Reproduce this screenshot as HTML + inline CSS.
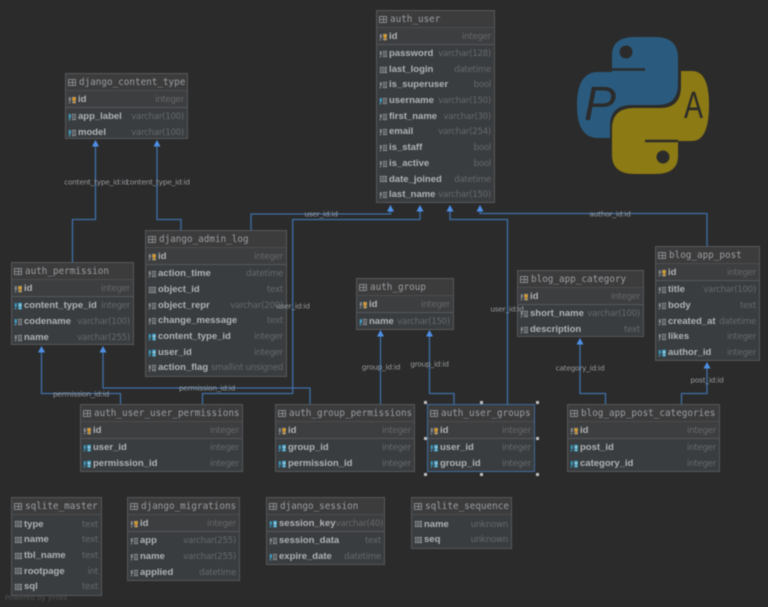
<!DOCTYPE html>
<html><head><meta charset="utf-8"><style>
html,body{margin:0;padding:0;background:#2b2b2b}
#w{position:relative;width:768px;height:607px;overflow:hidden;background:#2b2b2b;filter:blur(.4px)}
svg.a{position:absolute;left:0;top:0}
.t{position:absolute;box-sizing:border-box;background:#3a3d3f;border:1px solid #55575a;font-family:"Liberation Sans",sans-serif}
.t.s{border-color:#3f6a9e}
.h{height:17px;box-sizing:border-box;background:#3c3c3d;border-bottom:1px solid #4a4c4e;font:9.3px/17px "DejaVu Sans Mono",monospace;color:#9a9da0;padding-left:13px;position:relative;white-space:nowrap}
.h:before{content:"";position:absolute;left:1.5px;top:5px;width:6.5px;height:5px;border:1px solid #85888b;background:linear-gradient(#85888b,#85888b) 0 2px/100% 1px no-repeat,linear-gradient(#85888b,#85888b) 3px 0/1px 100% no-repeat}
.r{margin:0;height:15.7px;display:flex;justify-content:space-between;align-items:baseline;padding:0 3px 0 2px;white-space:nowrap;overflow:visible}
.r svg{width:9px;height:8px;flex:none;margin-right:1px;align-self:center}
.r b{font:bold 9.5px/15.7px "Liberation Sans",sans-serif;color:#b0b3b6;flex:none}
.r i{font:normal 8.7px/15.7px "DejaVu Sans",sans-serif;color:#66686b;margin-left:auto;letter-spacing:-.3px}
.k{height:15px;padding-top:1px;border-bottom:1px solid #55575a;background:#3c3e40;box-sizing:content-box}
.p{height:1.3px}
.l{position:absolute;font:7.4px/9px "DejaVu Sans",sans-serif;letter-spacing:-.25px;color:#969a9e;white-space:nowrap;transform:translate(-50%,-50%);z-index:5}
.m{position:absolute;width:3px;height:3px;background:#c0c0c0}
</style></head><body><div id="w">
<svg width="0" height="0" style="position:absolute"><defs>
<g id="g"><rect x="5" y="1" width="5" height="8" fill="#8a8d90"/><path d="M5 3.5h5M5 6h5M7.5 1v8" stroke="#3a3d3f" stroke-width=".7"/><path d="M1 1.5h2.5v5H1z" fill="#8a8d90"/><circle cx="1.8" cy="8.3" r="1" fill="#8a8d90"/></g>
<g id="c" transform="scale(.8)"><use href="#g"/></g>
<g id="d" transform="scale(.8)"><rect x="1" y="1" width="9" height="8" fill="#8a8d90"/><path d="M1 3.5h9M1 6h9M3.5 1v8M6.5 1v8" stroke="#3a3d3f" stroke-width=".7"/></g>
<g id="u" transform="scale(.8)"><use href="#g"/><path d="M1 1.5h2.5v5H1z" fill="#3aa0c8"/><circle cx="1.8" cy="8.3" r="1" fill="#3aa0c8"/></g>
<g id="k" transform="scale(.8)"><use href="#g"/><circle cx="7.6" cy="3.6" r="2.2" fill="#d99a2b"/><rect x="7" y="4.5" width="1.6" height="5" fill="#d99a2b"/></g>
<g id="f" transform="scale(.8)"><rect x="5" y="1" width="5" height="8" fill="#3aa0c8"/><path d="M5 3.5h5M5 6h5" stroke="#3a3d3f" stroke-width=".7"/><path d="M1 1.5h2.5v5H1z" fill="#3aa0c8"/><circle cx="1.8" cy="8.3" r="1" fill="#3aa0c8"/><circle cx="7.6" cy="4" r="1.8" fill="#8fc6de"/><rect x="7" y="5" width="1.3" height="4.5" fill="#8fc6de"/></g>
</defs></svg>

<svg class="a" width="768" height="607" fill="none">
<g stroke="#3f6fa8" stroke-width="1.3">
<path d="M95.5 146V219.5H72.5V262"/><path d="M157 146V219.5H181V230"/>
<path d="M41.5 352V393.5H120.5V404"/><path d="M103 352V388H310V404"/>
<path d="M202.5 404V393.5H292.7V219.5H420V211"/>
<path d="M251 230V214H390.5V211"/>
<path d="M450 211V219.5H507.5V404"/>
<path d="M480 211V213.5H707V246"/>
<path d="M380.5 336V404"/><path d="M429.5 336V393.5H454V404"/>
<path d="M580 344V393.5H605.5V404"/>
<path d="M707 368V393.5H681.5V404"/>
</g>
<g fill="#4e8fe6">
<path d="M95.5 140l-3.5 6.5h7z"/><path d="M157 140l-3.5 6.5h7z"/>
<path d="M41.5 346l-3.5 6.5h7z"/><path d="M103 346l-3.5 6.5h7z"/>
<path d="M390.5 205l-3.5 6.5h7z"/><path d="M420 205l-3.5 6.5h7z"/><path d="M450 205l-3.5 6.5h7z"/><path d="M480 205l-3.5 6.5h7z"/>
<path d="M380.5 330l-3.5 6.5h7z"/><path d="M429.5 330l-3.5 6.5h7z"/>
<path d="M580 338l-3.5 6.5h7z"/><path d="M707 362l-3.5 6.5h7z"/>
</g>
<path d="M612 69V55Q612 37 635 37H655Q678 37 678 58V84Q678 105 658 105H632Q610 105 610 126V138H598Q577 138 577 105Q577 72 598 72H612Z" fill="#2a5b7e"/>
<path d="M612 69H645V75H612Z" fill="#2a5b7e"/>
<path d="M613 69.5H644" stroke="#2b2b2b" stroke-width="2.4" stroke-linecap="round"/>
<path d="M612 129Q612 108 634 108H660Q681 108 681 86V71H692Q709 71 709 105Q709 141 692 141H678V156Q678 174 655 174H635Q612 174 612 155Z" fill="#8c7a14"/>
<path d="M646 141H677" stroke="#2b2b2b" stroke-width="2.4" stroke-linecap="round"/>
<circle cx="626" cy="52" r="6.5" fill="#2b2b2b"/><circle cx="663" cy="157" r="6.5" fill="#2b2b2b"/>
<text x="584" y="120" font-family="Liberation Sans,sans-serif" font-style="italic" font-size="48" fill="#2b2b2b">P</text>
<text transform="translate(684 118) scale(.75 1)" font-family="Liberation Sans,sans-serif" font-size="38" fill="#2b2b2b">A</text>
</svg>

<div class="t" style="left:376px;top:10px;width:119px;height:193px"><div class="h">auth_user</div>
<p class="r k"><svg><use href="#k"/></svg><b>id</b><i>integer</i></p><div class="p" style="height:1px"></div>
<p class="r"><svg><use href="#c"/></svg><b>password</b><i>varchar(128)</i></p>
<p class="r"><svg><use href="#d"/></svg><b>last_login</b><i>datetime</i></p>
<p class="r"><svg><use href="#c"/></svg><b>is_superuser</b><i>bool</i></p>
<p class="r"><svg><use href="#u"/></svg><b>username</b><i>varchar(150)</i></p>
<p class="r"><svg><use href="#c"/></svg><b>first_name</b><i>varchar(30)</i></p>
<p class="r"><svg><use href="#c"/></svg><b>email</b><i>varchar(254)</i></p>
<p class="r"><svg><use href="#c"/></svg><b>is_staff</b><i>bool</i></p>
<p class="r"><svg><use href="#c"/></svg><b>is_active</b><i>bool</i></p>
<p class="r"><svg><use href="#d"/></svg><b>date_joined</b><i>datetime</i></p>
<p class="r"><svg><use href="#c"/></svg><b>last_name</b><i>varchar(150)</i></p></div>

<div class="t" style="left:65px;top:73px;width:123px;height:66px"><div class="h">django_content_type</div>
<p class="r k"><svg><use href="#k"/></svg><b>id</b><i>integer</i></p><div class="p"></div>
<p class="r"><svg><use href="#u"/></svg><b>app_label</b><i>varchar(100)</i></p>
<p class="r"><svg><use href="#u"/></svg><b>model</b><i>varchar(100)</i></p></div>

<div class="t" style="left:11px;top:262px;width:123px;height:83px"><div class="h">auth_permission</div>
<p class="r k"><svg><use href="#k"/></svg><b>id</b><i>integer</i></p><div class="p"></div>
<p class="r"><svg><use href="#f"/></svg><b>content_type_id</b><i>integer</i></p>
<p class="r"><svg><use href="#u"/></svg><b>codename</b><i>varchar(100)</i></p>
<p class="r"><svg><use href="#c"/></svg><b>name</b><i>varchar(255)</i></p></div>

<div class="t" style="left:145px;top:230px;width:142px;height:147px"><div class="h">django_admin_log</div>
<p class="r k"><svg><use href="#k"/></svg><b>id</b><i>integer</i></p><div class="p"></div>
<p class="r"><svg><use href="#c"/></svg><b>action_time</b><i>datetime</i></p>
<p class="r"><svg><use href="#d"/></svg><b>object_id</b><i>text</i></p>
<p class="r"><svg><use href="#c"/></svg><b>object_repr</b><i>varchar(200)</i></p>
<p class="r"><svg><use href="#c"/></svg><b>change_message</b><i>text</i></p>
<p class="r"><svg><use href="#f"/></svg><b>content_type_id</b><i>integer</i></p>
<p class="r"><svg><use href="#f"/></svg><b>user_id</b><i>integer</i></p>
<p class="r"><svg><use href="#c"/></svg><b>action_flag</b><i>smallint unsigned</i></p></div>

<div class="t" style="left:356px;top:278px;width:98px;height:52px"><div class="h">auth_group</div>
<p class="r k"><svg><use href="#k"/></svg><b>id</b><i>integer</i></p><div class="p"></div>
<p class="r"><svg><use href="#u"/></svg><b>name</b><i>varchar(150)</i></p></div>

<div class="t" style="left:517px;top:270px;width:127px;height:67px"><div class="h">blog_app_category</div>
<p class="r k"><svg><use href="#k"/></svg><b>id</b><i>integer</i></p><div class="p"></div>
<p class="r"><svg><use href="#c"/></svg><b>short_name</b><i>varchar(100)</i></p>
<p class="r"><svg><use href="#c"/></svg><b>description</b><i>text</i></p></div>

<div class="t" style="left:655px;top:246px;width:105px;height:115px"><div class="h">blog_app_post</div>
<p class="r k"><svg><use href="#k"/></svg><b>id</b><i>integer</i></p><div class="p"></div>
<p class="r"><svg><use href="#c"/></svg><b>title</b><i>varchar(100)</i></p>
<p class="r"><svg><use href="#c"/></svg><b>body</b><i>text</i></p>
<p class="r"><svg><use href="#c"/></svg><b>created_at</b><i>datetime</i></p>
<p class="r"><svg><use href="#c"/></svg><b>likes</b><i>integer</i></p>
<p class="r"><svg><use href="#f"/></svg><b>author_id</b><i>integer</i></p></div>

<div class="t" style="left:80px;top:404px;width:163px;height:68px"><div class="h">auth_user_user_permissions</div>
<p class="r k"><svg><use href="#k"/></svg><b>id</b><i>integer</i></p><div class="p"></div>
<p class="r"><svg><use href="#f"/></svg><b>user_id</b><i>integer</i></p>
<p class="r"><svg><use href="#f"/></svg><b>permission_id</b><i>integer</i></p></div>

<div class="t" style="left:275px;top:404px;width:140px;height:68px"><div class="h">auth_group_permissions</div>
<p class="r k"><svg><use href="#k"/></svg><b>id</b><i>integer</i></p><div class="p"></div>
<p class="r"><svg><use href="#f"/></svg><b>group_id</b><i>integer</i></p>
<p class="r"><svg><use href="#f"/></svg><b>permission_id</b><i>integer</i></p></div>

<div class="t s" style="left:427px;top:404px;width:108px;height:68px"><div class="h">auth_user_groups</div>
<p class="r k"><svg><use href="#k"/></svg><b>id</b><i>integer</i></p><div class="p"></div>
<p class="r"><svg><use href="#f"/></svg><b>user_id</b><i>integer</i></p>
<p class="r"><svg><use href="#f"/></svg><b>group_id</b><i>integer</i></p></div>

<div class="t" style="left:567px;top:404px;width:153px;height:68px"><div class="h">blog_app_post_categories</div>
<p class="r k"><svg><use href="#k"/></svg><b>id</b><i>integer</i></p><div class="p"></div>
<p class="r"><svg><use href="#f"/></svg><b>post_id</b><i>integer</i></p>
<p class="r"><svg><use href="#f"/></svg><b>category_id</b><i>integer</i></p></div>

<div class="t" style="left:11px;top:497px;width:91px;height:99px"><div class="h" style="margin-bottom:1.5px">sqlite_master</div>
<p class="r"><svg><use href="#d"/></svg><b>type</b><i>text</i></p>
<p class="r"><svg><use href="#d"/></svg><b>name</b><i>text</i></p>
<p class="r"><svg><use href="#d"/></svg><b>tbl_name</b><i>text</i></p>
<p class="r"><svg><use href="#d"/></svg><b>rootpage</b><i>int</i></p>
<p class="r"><svg><use href="#d"/></svg><b>sql</b><i>text</i></p></div>

<div class="t" style="left:127px;top:497px;width:113px;height:84px"><div class="h">django_migrations</div>
<p class="r k"><svg><use href="#k"/></svg><b>id</b><i>integer</i></p><div class="p"></div>
<p class="r"><svg><use href="#c"/></svg><b>app</b><i>varchar(255)</i></p>
<p class="r"><svg><use href="#c"/></svg><b>name</b><i>varchar(255)</i></p>
<p class="r"><svg><use href="#c"/></svg><b>applied</b><i>datetime</i></p></div>

<div class="t" style="left:266px;top:497px;width:119px;height:68px"><div class="h">django_session</div>
<p class="r k"><svg><use href="#f"/></svg><b>session_key</b><i>varchar(40)</i></p><div class="p"></div>
<p class="r"><svg><use href="#c"/></svg><b>session_data</b><i>text</i></p>
<p class="r"><svg><use href="#u"/></svg><b>expire_date</b><i>datetime</i></p></div>

<div class="t" style="left:411px;top:497px;width:101px;height:52px"><div class="h" style="margin-bottom:1.5px">sqlite_sequence</div>
<p class="r"><svg><use href="#d"/></svg><b>name</b><i>unknown</i></p>
<p class="r"><svg><use href="#d"/></svg><b>seq</b><i>unknown</i></p></div>

<div class="l" style="left:96px;top:182px">content_type_id:id</div>
<div class="l" style="left:158px;top:182px">content_type_id:id</div>
<div class="l" style="left:321px;top:213.5px">user_id:id</div>
<div class="l" style="left:293px;top:306px">user_id:id</div>
<div class="l" style="left:507px;top:309px">user_id:id</div>
<div class="l" style="left:610px;top:213.5px">author_id:id</div>
<div class="l" style="left:81px;top:393.5px">permission_id:id</div>
<div class="l" style="left:207px;top:387.5px">permission_id:id</div>
<div class="l" style="left:381px;top:367px">group_id:id</div>
<div class="l" style="left:429.5px;top:364px">group_id:id</div>
<div class="l" style="left:580px;top:368px">category_id:id</div>
<div class="l" style="left:707px;top:380px">post_id:id</div>

<div class="m" style="left:424px;top:401px"></div><div class="m" style="left:480px;top:401px"></div><div class="m" style="left:536px;top:401px"></div>
<div class="m" style="left:424px;top:437px"></div><div class="m" style="left:536px;top:437px"></div>
<div class="m" style="left:424px;top:473px"></div><div class="m" style="left:480px;top:473px"></div><div class="m" style="left:536px;top:473px"></div>

<div style="position:absolute;left:5px;top:593px;font:7px/10px 'DejaVu Sans',sans-serif;color:#505254">Powered by yFiles</div>
</div></body></html>
